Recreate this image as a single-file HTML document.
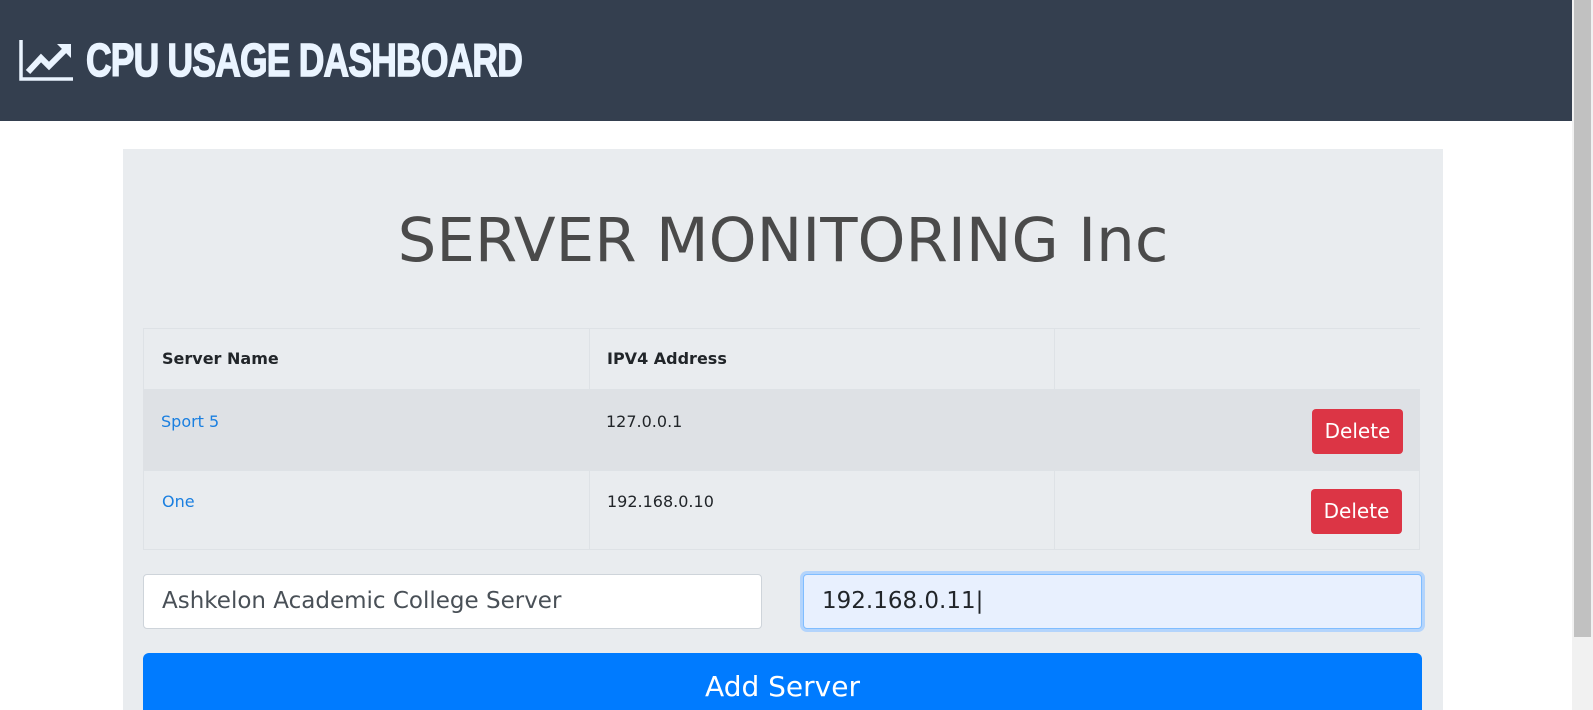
<!DOCTYPE html>
<html style="overflow:hidden;height:710px"><head><meta charset="utf-8"><style>
*{box-sizing:border-box;margin:0;padding:0}
body{width:1593px;height:710px;overflow:hidden;background:#fff;font-family:"DejaVu Sans","Liberation Sans",sans-serif;position:relative}
.hdr{position:absolute;left:0;top:0;width:1572px;height:121px;background:#343f4f}
.hdr .t{position:absolute;left:86px;top:30px;font-family:"Liberation Sans",sans-serif;font-weight:bold;font-size:46px;color:#eaf4ff;transform:scaleX(0.77);transform-origin:left;letter-spacing:-1px;line-height:60px;-webkit-text-stroke:1.5px #eaf4ff}
.box{position:absolute;left:123px;top:149px;width:1320px;height:561px;background:#e9ecef}
h1{position:absolute;left:0;width:1566px;top:205px;text-align:center;font-weight:normal;font-size:61px;color:#4a4a4a;line-height:72px}
.tbl{position:absolute;left:143px;top:328px;width:1277px;font-size:16px;color:#212529}
.row{position:absolute;left:0;width:1277px;border-top:1px solid #dee2e6}
.c{position:absolute;top:0;bottom:0;border-left:1px solid #dee2e6}
a{color:#1a7fe0;text-decoration:none}
.del{position:absolute;right:17px;width:91px;height:45px;background:#dc3545;color:#fff;border-radius:4px;font-size:20px;text-align:center;line-height:45px}
.in{position:absolute;top:574px;height:55px;border:1px solid #ced4da;border-radius:4px;background:#fff;font-size:23px;color:#495057;padding-left:18px;line-height:53px}
.btn{position:absolute;left:143px;top:653px;width:1279px;height:57px;background:#007bff;border-radius:6px 6px 0 0;color:#fff;font-size:28px;text-align:center;line-height:68px;overflow:hidden}
.sb{position:absolute;left:1572px;top:0;width:21px;height:710px;background:#f1f1f1}
.sb .th{position:absolute;left:2px;top:0;width:17px;height:637px;background:#c1c1c1}
</style></head><body>
<div class="hdr">
<svg style="position:absolute;left:19px;top:40px" width="55" height="42" viewBox="0 0 55 42"><path d="M2 0V39H54" stroke="#eaf4ff" stroke-width="3.5" fill="none"/><path d="M9 32L22 18L30 26L47 9" stroke="#eaf4ff" stroke-width="6" fill="none"/><path d="M38 4H52V18Z" fill="#eaf4ff"/></svg>
<div class="t">CPU USAGE DASHBOARD</div>
</div>
<div class="box"></div>
<h1>SERVER MONITORING Inc</h1>
<div class="tbl">
<div class="row" style="top:0;height:61px;border-left:1px solid #dee2e6"><div class="c" style="left:445px"></div><div class="c" style="left:910px"></div><b style="position:absolute;left:18px;top:20px">Server Name</b><b style="position:absolute;left:463px;top:20px">IPV4 Address</b></div>
<div class="row" style="top:61px;height:81px;background:#dee1e5"><span style="position:absolute;left:18px;top:22px"><a>Sport 5</a></span><span style="position:absolute;left:463px;top:22px">127.0.0.1</span><div class="del" style="top:19px">Delete</div></div>
<div class="row" style="top:142px;height:80px;border-left:1px solid #dee2e6;border-right:1px solid #dee2e6;border-bottom:1px solid #dee2e6"><div class="c" style="left:445px"></div><div class="c" style="left:910px"></div><span style="position:absolute;left:18px;top:21px"><a>One</a></span><span style="position:absolute;left:463px;top:21px">192.168.0.10</span><div class="del" style="top:18px">Delete</div></div>
</div>
<div class="in" style="left:143px;width:619px">Ashkelon Academic College Server</div>
<div class="in" style="left:803px;width:619px;background:#e8f0fe;border-color:#80bdff;box-shadow:0 0 0 3px #b3d4fc;color:#212529">192.168.0.11|</div>
<div class="btn">Add Server</div>
<div class="sb"><div class="th"></div></div>
</body></html>
